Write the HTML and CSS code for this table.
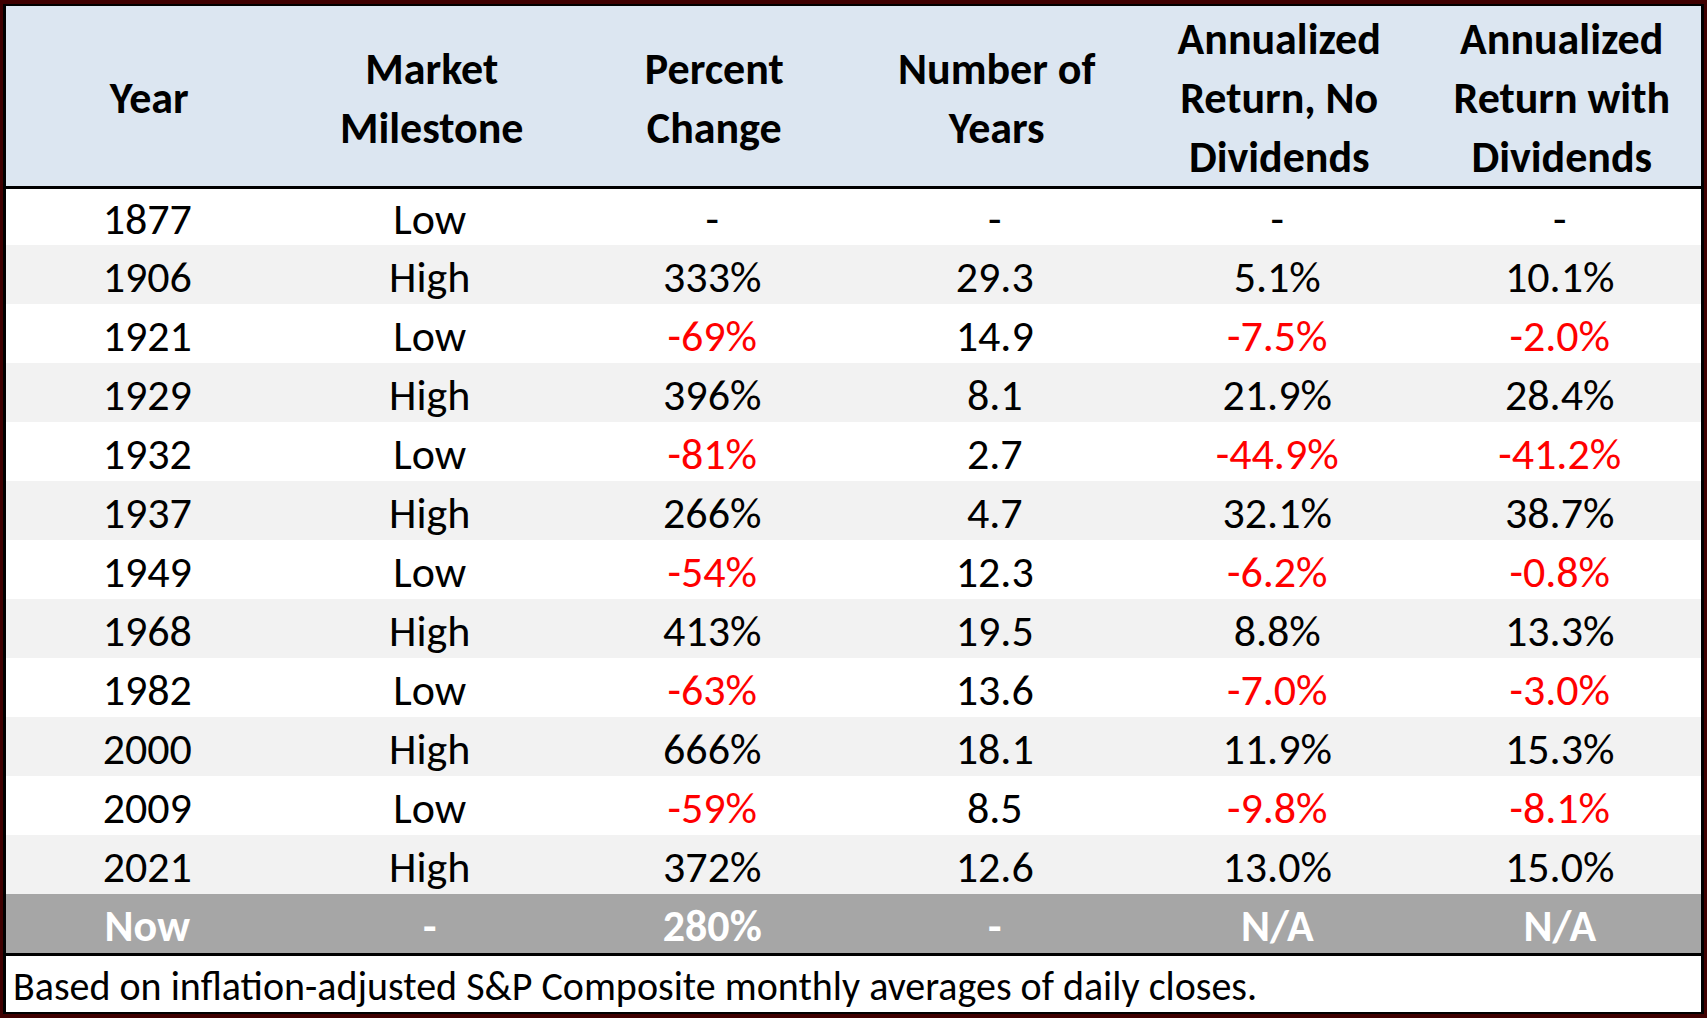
FILE: index.html
```html
<!DOCTYPE html>
<html>
<head>
<meta charset="utf-8">
<link rel="stylesheet" href="styles.css">
</head>
<body>
<div class="frame">
  <div class="row head">
    <div class="cell">Year</div>
    <div class="cell">Market<br>Milestone</div>
    <div class="cell">Percent<br>Change</div>
    <div class="cell">Number of<br>Years</div>
    <div class="cell">Annualized<br>Return, No<br>Dividends</div>
    <div class="cell">Annualized<br>Return with<br>Dividends</div>
  </div>
  <div class="row data first">
    <div class="cell">1877</div><div class="cell">Low</div><div class="cell">-</div><div class="cell">-</div><div class="cell">-</div><div class="cell">-</div>
  </div>
  <div class="row data alt">
    <div class="cell">1906</div><div class="cell">High</div><div class="cell">333%</div><div class="cell">29.3</div><div class="cell">5.1%</div><div class="cell">10.1%</div>
  </div>
  <div class="row data">
    <div class="cell">1921</div><div class="cell">Low</div><div class="cell neg">-69%</div><div class="cell">14.9</div><div class="cell neg">-7.5%</div><div class="cell neg">-2.0%</div>
  </div>
  <div class="row data alt">
    <div class="cell">1929</div><div class="cell">High</div><div class="cell">396%</div><div class="cell">8.1</div><div class="cell">21.9%</div><div class="cell">28.4%</div>
  </div>
  <div class="row data">
    <div class="cell">1932</div><div class="cell">Low</div><div class="cell neg">-81%</div><div class="cell">2.7</div><div class="cell neg">-44.9%</div><div class="cell neg">-41.2%</div>
  </div>
  <div class="row data alt">
    <div class="cell">1937</div><div class="cell">High</div><div class="cell">266%</div><div class="cell">4.7</div><div class="cell">32.1%</div><div class="cell">38.7%</div>
  </div>
  <div class="row data">
    <div class="cell">1949</div><div class="cell">Low</div><div class="cell neg">-54%</div><div class="cell">12.3</div><div class="cell neg">-6.2%</div><div class="cell neg">-0.8%</div>
  </div>
  <div class="row data alt">
    <div class="cell">1968</div><div class="cell">High</div><div class="cell">413%</div><div class="cell">19.5</div><div class="cell">8.8%</div><div class="cell">13.3%</div>
  </div>
  <div class="row data">
    <div class="cell">1982</div><div class="cell">Low</div><div class="cell neg">-63%</div><div class="cell">13.6</div><div class="cell neg">-7.0%</div><div class="cell neg">-3.0%</div>
  </div>
  <div class="row data alt">
    <div class="cell">2000</div><div class="cell">High</div><div class="cell">666%</div><div class="cell">18.1</div><div class="cell">11.9%</div><div class="cell">15.3%</div>
  </div>
  <div class="row data">
    <div class="cell">2009</div><div class="cell">Low</div><div class="cell neg">-59%</div><div class="cell">8.5</div><div class="cell neg">-9.8%</div><div class="cell neg">-8.1%</div>
  </div>
  <div class="row data alt">
    <div class="cell">2021</div><div class="cell">High</div><div class="cell">372%</div><div class="cell">12.6</div><div class="cell">13.0%</div><div class="cell">15.0%</div>
  </div>
  <div class="row now">
    <div class="cell">Now</div><div class="cell">-</div><div class="cell">280%</div><div class="cell">-</div><div class="cell">N/A</div><div class="cell">N/A</div>
  </div>
  <div class="note">Based on inflation-adjusted S&amp;P Composite monthly averages of daily closes.</div>
</div>
</body>
</html>
```

FILE: styles.css
```css
html, body {
  margin: 0;
  padding: 0;
  background: #3f0000;
}
body {
  padding: 4px 3px;
  font-family: "Carlito", "Lato", "Liberation Sans", sans-serif;
  color: #000;
}
.frame {
  width: 1695px;
  height: 1006px;
  border-top: 2px solid #000;
  border-bottom: 2px solid #000;
  border-left: 3px solid #000;
  border-right: 3px solid #000;
  background: #fff;
  display: flex;
  flex-direction: column;
}
.row {
  display: grid;
  grid-template-columns: repeat(6, 1fr);
  align-items: center;
  text-align: center;
  font-size: 44px;
  box-sizing: border-box;
}
.head {
  height: 183px;
  background: #dce6f1;
  border-bottom: 3px solid #000;
  font-weight: 700;
  line-height: 59px;
  padding-top: 4px;
}
.head .cell {
  padding-left: 4px;
}
.data {
  height: 59px;
  padding-top: 6px;
  line-height: 53px;
  background: #fff;
}
.data.first {
  height: 56px;
  padding-top: 5px;
  line-height: 51px;
}
.data.alt {
  background: #f2f2f2;
}
.neg {
  color: #ff0000;
}
.now {
  height: 62px;
  padding-top: 6px;
  line-height: 53px;
  background: #a6a6a6;
  color: #fff;
  font-weight: 700;
  border-bottom: 3px solid #000;
}
.note {
  height: 56px;
  box-sizing: border-box;
  padding-top: 6px;
  line-height: 50px;
  padding-left: 7px;
  font-size: 40px;
  white-space: nowrap;
}
```
